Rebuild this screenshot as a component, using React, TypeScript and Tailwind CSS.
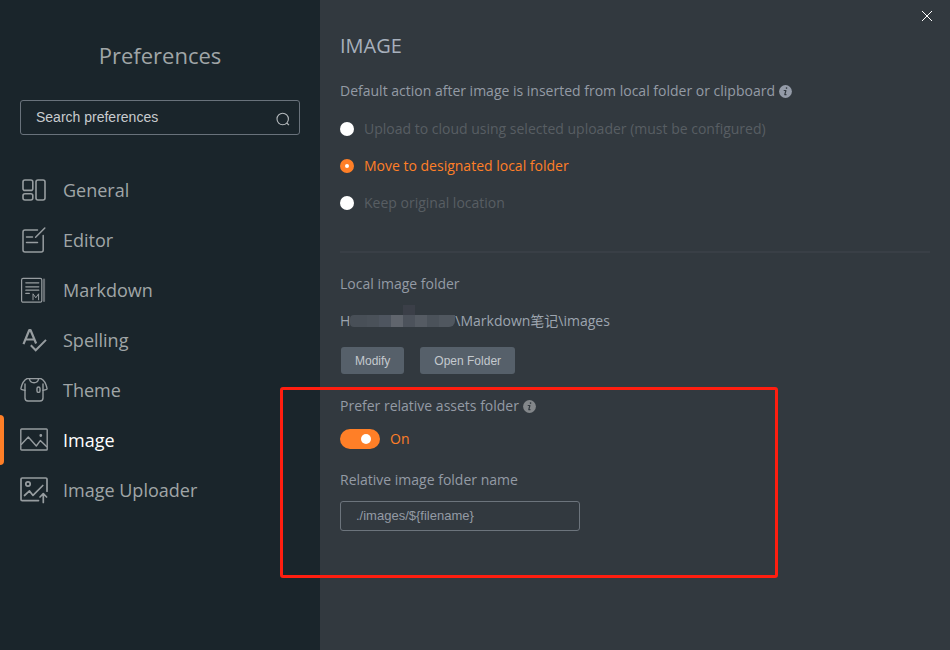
import { useState } from "react";
import type { ReactNode } from "react";

type Section = { name: string; icon: ReactNode };

const SECTIONS: Section[] = [
  {
    name: "General",
    icon: (
      <g strokeWidth="1.600">
        <rect x="3" y="4" width="9.800" height="10.400" rx="2" />
        <rect x="3" y="17.800" width="9.800" height="6.200" rx="2" />
        <rect x="16" y="4" width="9" height="20" rx="2" />
      </g>
    ),
  },
  {
    name: "Editor",
    icon: (
      <g strokeWidth="1.500">
        <path d="M17.500 4H5a2 2 0 0 0-2 2v18a2 2 0 0 0 2 2h16.200a2 2 0 0 0 2-2V9.500" />
        <path d="M24.800 2 15.600 11.200M6.500 11h6M6.500 16.500h11" />
      </g>
    ),
  },
  {
    name: "Markdown",
    icon: (
      <g strokeWidth="1.200">
        <rect x="1.600" y="2.400" width="20.200" height="23.800" rx="1.500" />
        <path d="M5.800 6.800h13M5.800 10.800h13M5.800 14.200h13M5.800 17.400h3.500" />
        <path d="M13 23.800v-6l2.800 4 2.800-4v6" strokeWidth="1" />
        <path d="M24 3.500v21.500" strokeWidth="2.200" opacity=".6" />
      </g>
    ),
  },
  {
    name: "Spelling",
    icon: (
      <g strokeWidth="2.200">
        <path d="M3.500 18.200 9.300 4h1.200l5.600 13.500M5.800 13.500h8.400" strokeLinecap="butt" />
        <path d="m10.800 19.300 4.900 5L26 13.900" strokeWidth="2" strokeLinecap="butt" strokeLinejoin="miter" />
      </g>
    ),
  },
  {
    name: "Theme",
    icon: (
      <g strokeWidth="1.400">
        <path d="M5 14.400 2 13.600a1.200 1.200 0 0 1-1-1.600C2 7.600 4 4.100 7 2.600h14c3 1.500 5 5 6 9.400a1.200 1.200 0 0 1-1 1.600l-3 .8" />
        <path d="M5 8v14a3 3 0 0 0 3 3h12a3 3 0 0 0 3-3V8" />
        <path d="M9.500 3c.8 5 8.200 5 9 0" />
        <rect x="17" y="11" width="3" height="5.400" rx="1.500" />
      </g>
    ),
  },
  {
    name: "Image",
    icon: (
      <g strokeWidth="1.400">
        <rect x=".8" y="3" width="26.400" height="21" rx=".8" />
        <path d="m1.500 18.200 6.800-7.200 8 9 4-5.400 6.200 6" />
        <circle cx="20.800" cy="9.500" r=".7" fill="currentColor" />
      </g>
    ),
  },
  {
    name: "Image Uploader",
    icon: (
      <g strokeWidth="1.700">
        <path d="M18.500 24.600H2.200a1.200 1.200 0 0 1-1.200-1.200V3.200A1.200 1.200 0 0 1 2.200 2h23.600A1.200 1.200 0 0 1 27 3.200v12" />
        <circle cx="8" cy="8" r="2.200" />
        <path d="m4.500 19.500 5-4.600 3.500 4.500L22.800 9.500" />
        <path d="M23.300 26.500V18M20 21l3.300-3.300L26.600 21" />
      </g>
    ),
  },
];

const ACTIONS = [
  "Upload to cloud using selected uploader (must be configured)",
  "Move to designated local folder",
  "Keep original location",
];

function InfoIcon({ className }: { className: string }) {
  return (
    <svg viewBox="0 0 13 13" className={`h-[13px] w-[13px] shrink-0 ${className}`} aria-hidden="true">
      <circle cx="6.500" cy="6.500" r="6.400" fill="currentColor" />
      <g stroke="#32393f" fill="none" strokeLinecap="round" strokeLinejoin="round">
        <path d="M5.200 5.500h1.700l-1.100 4.200h1.200" strokeWidth="1.200" />
        <path d="M7.500 3.100h.1" strokeWidth="1.600" />
      </g>
    </svg>
  );
}

// the private part of the path, pixelated
function Redacted() {
  return (
    <span className="relative flex h-3 w-[105px]">
      <i className="h-3 w-[17px] rounded-l-sm bg-[#484f57]" />
      <i className="h-3 w-3 bg-[#4a5159]" />
      <i className="h-3 w-3 bg-[#4e555f]" />
      <i className="h-3 w-3 bg-[#60656d]" />
      <i className="h-3 w-3 bg-[#4c525b]" />
      <i className="h-3 w-3 bg-[#555b63]" />
      <i className="h-3 w-3 bg-[#4b525a]" />
      <i className="h-3 w-4 rounded-br-md bg-[#50575f]" />
      <i className="absolute -top-2.5 left-[53px] h-2.5 w-3 bg-[#3b3f48]" />
    </span>
  );
}

export default function App() {
  const [active, setActive] = useState("Image");
  const [action, setAction] = useState(1);
  const [relative, setRelative] = useState(true);
  const [folder, setFolder] = useState("./images/${filename}");

  return (
    <div className="flex min-h-screen bg-[#32393f] font-['Open_Sans','Noto_Sans_CJK_SC',sans-serif] text-sm text-[#949ba5]">
      <aside className="w-80 shrink-0 bg-[#1a252b] pt-[39px] text-[#a0a5a7]">
        <h1 className="text-center text-[22px] leading-8">Preferences</h1>

        <div className="relative mx-5 mt-[29px]">
          <input
            type="search"
            aria-label="Search preferences"
            placeholder="Search preferences"
            className="block h-[35px] w-full rounded-[3px] border border-[#69727b] bg-transparent pr-10 pb-0.5 pl-[15px] font-['Liberation_Sans',sans-serif] text-sm text-[#d0d3d6] outline-none placeholder:text-[#c8cccf]"
          />
          <svg viewBox="0 0 14 14" className="pointer-events-none absolute top-3 right-2.5 h-3.5 w-3.5" fill="none" stroke="#b5babd" strokeWidth="1.100" aria-hidden="true">
            <circle cx="6.700" cy="7" r="5.700" />
            <path d="m10.800 11 2.200 2.200" />
          </svg>
        </div>

        <nav className="mt-[30px]">
          {SECTIONS.map((s) => (
            <button
              key={s.name}
              type="button"
              onClick={() => setActive(s.name)}
              className={`relative flex h-[50px] w-full items-center gap-[15px] pl-5 text-left text-lg ${active === s.name ? "text-white" : ""}`}
            >
              {active === s.name && <span className="absolute inset-y-0 left-0 w-1 rounded-r-sm bg-[#ff7f27]" />}
              <svg viewBox="0 0 28 28" className="h-7 w-7 shrink-0 text-[#979da0]" fill="none" stroke="currentColor" strokeLinecap="round" strokeLinejoin="round" aria-hidden="true">
                {s.icon}
              </svg>
              {s.name}
            </button>
          ))}
        </nav>
      </aside>

      <main className="relative min-w-0 flex-1 px-5 pt-8">
        <button type="button" aria-label="Close" className="absolute top-2 right-[15px] flex h-4 w-4 items-center justify-center text-white">
          <svg viewBox="0 0 12 12" className="h-3 w-3" stroke="currentColor" strokeWidth="1" aria-hidden="true">
            <path d="m1 1 10 10M11 1 1 11" />
          </svg>
        </button>

        <h2 className="text-xl leading-7 text-[#a7b0bc]">IMAGE</h2>

        <fieldset className="mt-[21px]">
          <legend className="flex items-center gap-1 leading-5">
            Default action after image is inserted from local folder or clipboard
            <InfoIcon className="text-[#949ba8]" />
          </legend>
          <div className="mt-[9px]">
            {ACTIONS.map((label, i) => (
              <label key={label} className={`flex h-[37px] items-center gap-2.5 ${action === i ? "text-[#ff7f27]" : "text-[#585e63]"}`}>
                <input
                  type="radio"
                  name="action"
                  checked={action === i}
                  onChange={() => setAction(i)}
                  className="h-3.5 w-3.5 shrink-0 appearance-none rounded-full bg-white checked:border-5 checked:border-[#ff7f27]"
                />
                {label}
              </label>
            ))}
          </div>
        </fieldset>

        <hr className="mt-[30px] border-t-2 border-[#393f46]" />

        <section className="mt-[21px]">
          <h3 className="leading-5">Local image folder</h3>
          <p className="mt-[17px] flex items-center leading-5 text-[#9da5af]">
            H<Redacted />\Markdown笔记\images
          </p>
          <div className="mt-4 flex gap-4 pl-px font-['Liberation_Sans',sans-serif] text-xs text-[#c4c9ce]">
            <button type="button" className="h-[27px] rounded-[3px] bg-[#56606a] px-3.5">
              Modify
            </button>
            <button type="button" className="h-[27px] rounded-[3px] bg-[#56606a] px-3.5">
              Open Folder
            </button>
          </div>
        </section>

        <section className="relative mt-[13px] max-w-[438px] pt-[9px] pb-[47px]">
          <div className="pointer-events-none absolute inset-y-0 right-0 -left-10 rounded-[3px] border-3 border-[#ff1e10] min-[900px]:-left-15" />
          <h3 className="flex items-center gap-1 leading-5">
            Prefer relative assets folder
            <InfoIcon className="text-[#83878a]" />
          </h3>
          <label className="mt-[13px] flex h-5 items-center gap-2.5 text-[#ff7f27]">
            <input
              type="checkbox"
              role="switch"
              checked={relative}
              onChange={(e) => setRelative(e.target.checked)}
              className="flex h-5 w-10 appearance-none items-center rounded-full bg-[#56606a] px-[9px] before:h-2.5 before:w-2.5 before:rounded-full before:bg-white checked:justify-end checked:bg-[#ff7f27]"
            />
            {relative ? "On" : "Off"}
          </label>
          <label htmlFor="folder-name" className="mt-[21px] block leading-5">
            Relative image folder name
          </label>
          <input
            id="folder-name"
            value={folder}
            onChange={(e) => setFolder(e.target.value)}
            className="mt-[11px] block h-[30px] w-60 rounded-[3px] border border-[#6c747c] bg-transparent px-[15px] pb-0.5 font-['Liberation_Sans',sans-serif] text-[13px] text-[#949ba5] outline-none"
          />
        </section>
      </main>
    </div>
  );
}
